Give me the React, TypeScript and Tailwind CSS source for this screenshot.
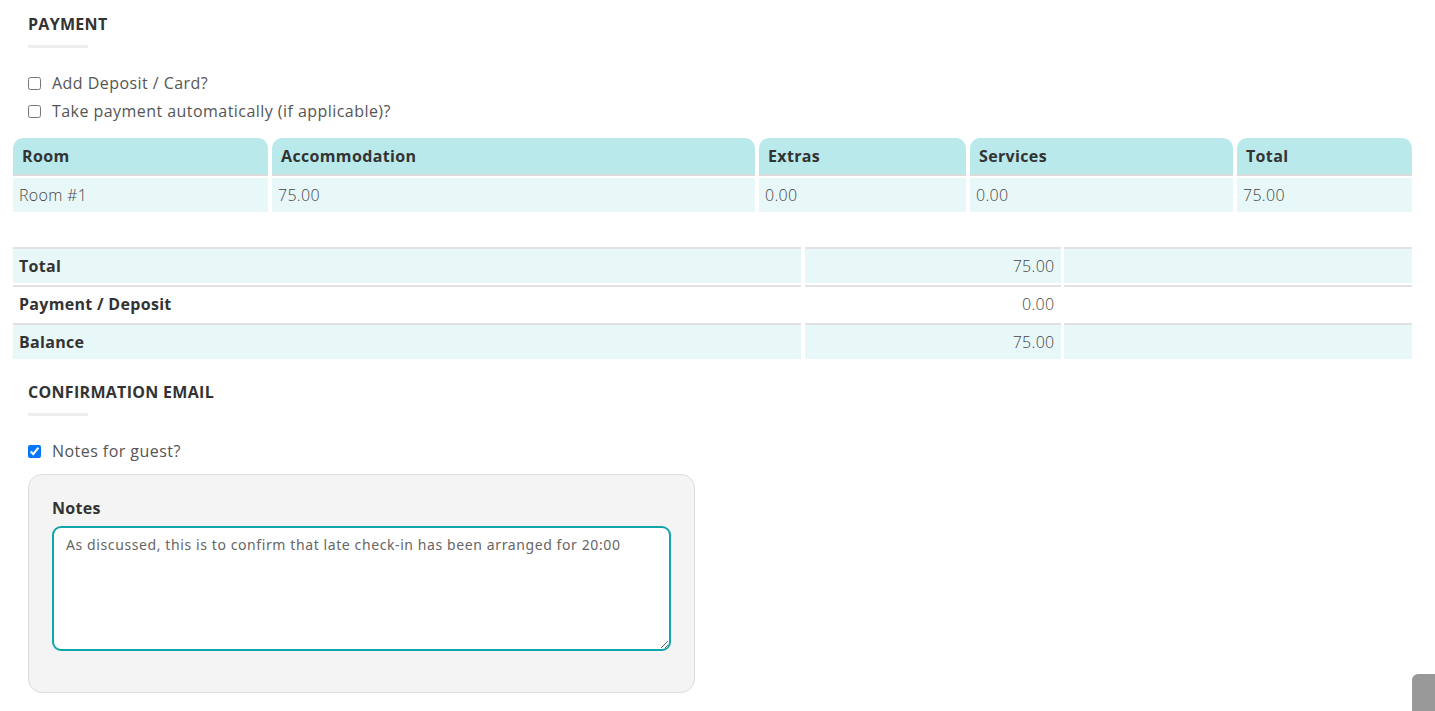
import React from "react";

const font = { fontFamily: '"Open Sans", "Noto Sans", sans-serif' };

function SectionTitle({ children }: { children: React.ReactNode }) {
  return (
    <div className="pl-[15px]">
      <div className="text-[16px] font-bold uppercase tracking-[0.3px] text-[#333] leading-[20px]">{children}</div>
      <div className="mt-[11px] h-[3px] w-[60px] bg-[#eeeeee]" />
    </div>
  );
}

function Check({ label, checked }: { label: string; checked?: boolean }) {
  return (
    <label className="flex items-center h-[28px] pl-[15px] text-[16px] tracking-[0.45px] text-[#555]">
      <input type="checkbox" defaultChecked={checked} className="m-0 w-[13px] h-[13px] accent-[#0075ff]" />
      <span className="ml-[11px]">{label}</span>
    </label>
  );
}

const cols = ["Room", "Accommodation", "Extras", "Services", "Total"];
const vals = ["Room #1", "75.00", "0.00", "0.00", "75.00"];

export default function App() {
  return (
    <div className="relative min-h-[711px] bg-white pl-[13px] pr-[23px] pt-[14px]" style={font}>
      <SectionTitle>Payment</SectionTitle>
      <div className="mt-[21px]">
        <Check label="Add Deposit / Card?" />
        <Check label="Take payment automatically (if applicable)?" />
      </div>

      <div className="mt-[13px] grid grid-cols-[255px_483px_207px_263px_175px] gap-x-[4px]">
        {cols.map((c) => (
          <div
            key={c}
            className="h-[38px] rounded-t-[10px] bg-[#b9e9eb] border-b-2 border-[#dadada] px-[9px] flex items-center text-[16px] font-bold tracking-[0.35px] text-[#333]"
          >
            {c}
          </div>
        ))}
        {vals.map((v, i) => (
          <div
            key={i}
            className="mt-[2px] h-[34px] bg-[#e8f7f8] px-[6px] flex items-center text-[16px] font-light tracking-[0.3px] text-[#444]"
          >
            {v}
          </div>
        ))}
      </div>

      <div className="mt-[35px] grid grid-cols-[788px_256px_348px] gap-x-[3.5px] gap-y-[2px]">
        {[
          ["Total", "75.00", true],
          ["Payment / Deposit", "0.00", false],
          ["Balance", "75.00", true],
        ].map(([l, v, bg], i) => (
          <React.Fragment key={i}>
            <div className={`h-[36px] border-t-2 border-[#e2e2e2] px-[6px] flex items-center text-[16px] font-bold tracking-[0.3px] text-[#333] ${bg ? "bg-[#e8f7f8]" : ""}`}>
              {l as string}
            </div>
            <div className={`h-[36px] border-t-2 border-[#e2e2e2] px-[6px] flex items-center justify-end text-[16px] font-light tracking-[0.3px] text-[#444] ${bg ? "bg-[#e8f7f8]" : ""}`}>
              {v as string}
            </div>
            <div className={`h-[36px] border-t-2 border-[#e2e2e2] ${bg ? "bg-[#e8f7f8]" : ""}`} />
          </React.Fragment>
        ))}
      </div>

      <div className="mt-[23px]">
        <SectionTitle>Confirmation Email</SectionTitle>
      </div>
      <div className="mt-[21px]">
        <Check label="Notes for guest?" checked />
      </div>

      <div className="ml-[15px] mt-[9px] w-[667px] h-[219px] rounded-[14px] border border-[#dddddd] bg-[#f4f4f4] px-[23px] pt-[23px]">
        <div className="text-[16px] font-bold tracking-[0.3px] text-[#333] leading-[20px]">Notes</div>
        <textarea
          className="mt-[8px] block w-[619px] h-[125px] rounded-[9px] border-2 border-[#10a5ab] bg-white px-[12px] py-[6px] text-[14px] tracking-[0.6px] text-[#666] outline-none resize-y"
          style={{ fontFamily: '"Noto Sans", Roboto, sans-serif' }}
          defaultValue="As discussed, this is to confirm that late check-in has been arranged for 20:00"
        />
      </div>

      <div className="fixed bottom-0 right-0 w-[23px] h-[37px] rounded-tl-[6px] bg-[#999999]" />
    </div>
  );
}
